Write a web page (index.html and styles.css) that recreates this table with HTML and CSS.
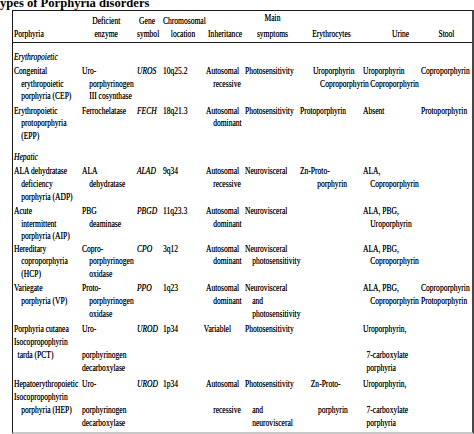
FILE: index.html
```html
<!DOCTYPE html>
<html>
<head>
<meta charset="utf-8">
<link rel="stylesheet" href="styles.css">
</head>
<body>
<div class="title">ypes of Porphyria disorders</div>
<div class="box">
  <div class="inner">
    <div class="head grid">
      <div class="hc c1"><div>Porphyria</div></div>
      <div class="hc c hdef"><div>Deficient</div><div>enzyme</div></div>
      <div class="hc c hgene"><div>Gene</div><div>symbol</div></div>
      <div class="hc c hchr"><div>Chromosomal</div><div>location</div></div>
      <div class="hc hinh"><div>Inheritance</div></div>
      <div class="hc c"><div class="main">Main</div><div>symptoms</div></div>
      <div class="hc c"><div>Erythrocytes</div></div>
      <div class="hc c hur"><div>Urine</div></div>
      <div class="hc c"><div>Stool</div></div>
    </div>
    <div class="body">
      <div class="row grid">
        <div class="c1"><i>Erythropoietic</i></div>
      </div>
      <div class="row grid">
        <div class="c1"><div>Congenital</div><div class="i">erythropoietic</div><div class="i">porphyria (CEP)</div></div>
        <div><div>Uro-</div><div class="i">porphyrinogen</div><div class="i">III cosynthase</div></div>
        <div><i>UROS</i></div>
        <div>10q25.2</div>
        <div><div>Autosomal</div><div class="i">recessive</div></div>
        <div>Photosensitivity</div>
        <div class="sh"><div>Uroporphyrin</div><div class="i">Coproporphyrin</div></div>
        <div><div>Uroporphyrin</div><div class="i">Coproporphyrin</div></div>
        <div>Coproporphyrin</div>
      </div>
      <div class="row grid">
        <div class="c1"><div>Erythropoietic</div><div class="i">protoporphyria</div><div class="i">(EPP)</div></div>
        <div>Ferrochelatase</div>
        <div><i>FECH</i></div>
        <div>18q21.3</div>
        <div><div>Autosomal</div><div class="i">dominant</div></div>
        <div>Photosensitivity</div>
        <div>Protoporphyrin</div>
        <div>Absent</div>
        <div>Protoporphyrin</div>
      </div>
      <div class="row grid sec2">
        <div class="c1"><i>Hepatic</i></div>
      </div>
      <div class="row grid">
        <div class="c1"><div>ALA dehydratase</div><div class="i">deficiency</div><div class="i">porphyria (ADP)</div></div>
        <div><div>ALA</div><div class="i">dehydratase</div></div>
        <div><i>ALAD</i></div>
        <div>9q34</div>
        <div><div>Autosomal</div><div class="i">recessive</div></div>
        <div>Neurovisceral</div>
        <div><div>Zn-Proto-</div><div class="i2">porphyrin</div></div>
        <div><div>ALA,</div><div class="i">Coproporphyrin</div></div>
        <div></div>
      </div>
      <div class="row grid">
        <div class="c1"><div>Acute</div><div class="i">intermittent</div><div class="i">porphyria (AIP)</div></div>
        <div><div>PBG</div><div class="i">deaminase</div></div>
        <div><i>PBGD</i></div>
        <div>11q23.3</div>
        <div><div>Autosomal</div><div class="i">dominant</div></div>
        <div>Neurovisceral</div>
        <div></div>
        <div><div>ALA, PBG,</div><div class="i">Uroporphyrin</div></div>
        <div></div>
      </div>
      <div class="row grid m-hcp">
        <div class="c1"><div>Hereditary</div><div class="i">coproporphyria</div><div class="i">(HCP)</div></div>
        <div><div>Copro-</div><div class="i">porphyrinogen</div><div class="i">oxidase</div></div>
        <div><i>CPO</i></div>
        <div>3q12</div>
        <div><div>Autosomal</div><div class="i">dominant</div></div>
        <div><div>Neurovisceral</div><div class="i">photosensitivity</div></div>
        <div></div>
        <div><div>ALA, PBG,</div><div class="i">Coproporphyrin</div></div>
        <div></div>
      </div>
      <div class="row grid">
        <div class="c1"><div>Variegate</div><div class="i">porphyria (VP)</div></div>
        <div><div>Proto-</div><div class="i">porphyrinogen</div><div class="i">oxidase</div></div>
        <div><i>PPO</i></div>
        <div>1q23</div>
        <div><div>Autosomal</div><div class="i">dominant</div></div>
        <div><div>Neurovisceral</div><div class="i">and</div><div class="i">photosensitivity</div></div>
        <div></div>
        <div><div>ALA, PBG,</div><div class="i">Coproporphyrin</div></div>
        <div><div>Coproporphyrin</div><div>Protoporphyrin</div></div>
      </div>
      <div class="row grid m-pct">
        <div class="c1"><div>Porphyria cutanea</div><div>Isocopropophyrin</div><div class="is">tarda (PCT)</div></div>
        <div><div>Uro-</div><div>&nbsp;</div><div>porphyrinogen</div><div>decarboxylase</div></div>
        <div><i>UROD</i></div>
        <div>1p34</div>
        <div class="var">Variablel</div>
        <div>Photosensitivity</div>
        <div></div>
        <div><div>Uroporphyrin,</div><div>&nbsp;</div><div class="is">7-carboxylate</div><div class="is">porphyria</div></div>
        <div></div>
      </div>
      <div class="row grid m-hep">
        <div class="c1"><div>Hepatoerythropoietic</div><div>Isocopropophyrin</div><div class="i">porphyria (HEP)</div></div>
        <div><div>Uro-</div><div>&nbsp;</div><div>porphyrinogen</div><div>decarboxylase</div></div>
        <div><i>UROD</i></div>
        <div>1p34</div>
        <div><div>Autosomal</div><div>&nbsp;</div><div class="i">recessive</div></div>
        <div><div>Photosensitivity</div><div>&nbsp;</div><div class="i">and</div><div class="i">neurovisceral</div></div>
        <div class="sh2"><div>Zn-Proto-</div><div>&nbsp;</div><div class="i">porphyrin</div></div>
        <div><div>Uroporphyrin,</div><div>&nbsp;</div><div class="is">7-carboxylate</div><div class="is">porphyria</div></div>
        <div></div>
      </div>
    </div>
  </div>
</div>
</body>
</html>
```

FILE: styles.css
```css
html, body {
  margin: 0;
  padding: 0;
  background: #ffffff;
  overflow: hidden;
}

body {
  width: 474px;
  height: 434px;
  font-family: "Liberation Serif", "Times New Roman", serif;
  color: #000000;
}

.title {
  font-weight: bold;
  font-size: 12.6px;
  line-height: 14px;
  height: 14px;
  margin-top: -4px;
  white-space: nowrap;
  color: #000;
}

.box {
  margin-left: 12px;
  width: 459px;
  height: 421px;
  border-top: 1px solid #1a1a1a;
  border-left: 1px solid #1a1a1a;
  border-right: 2px solid #474747;
  border-bottom: 2px solid #c8c8c8;
  overflow: hidden;
}

.inner {
  width: 637.5px;
  transform: scaleX(0.72);
  transform-origin: 0 0;
  font-size: 10.5px;
  text-shadow: 0 0 0.5px rgba(0, 0, 0, 0.7);
}

.grid {
  display: grid;
  grid-template-columns: 95.8px 76.4px 36.1px 59.7px 54.2px 76.4px 87.5px 80.6px 70.8px;
}

.grid > div {
  white-space: nowrap;
}

.head {
  height: 26px;
  padding-bottom: 5px;
  border-bottom: 1px solid #1a1a1a;
  align-items: end;
  line-height: 13px;
}

.hc.c { text-align: center; }
.hdef { padding-right: 9px; }
.hgene { padding-right: 8px; }
.hchr { padding-right: 4px; }
.hinh { padding-left: 3px; }
.hur { padding-left: 24px; }
.main { padding-bottom: 3px; }

.c1 { padding-left: 1.4px; }

.body {
  padding-top: 7.6px;
  display: flex;
  flex-direction: column;
  gap: 1.4px;
  line-height: 12.8px;
}

.sec2 { margin-top: 6.5px; }
.m-hcp { margin-top: -2px; }
.m-pct { margin-top: 1px; }
.m-hep { margin-top: 2.5px; }

.i { padding-left: 10px; }
.i2 { padding-left: 24px; }
.is { padding-left: 5px; }
.sh { padding-left: 18px; }
.sh2 { padding-left: 15px; }
.var { margin-left: -3px; }
```
